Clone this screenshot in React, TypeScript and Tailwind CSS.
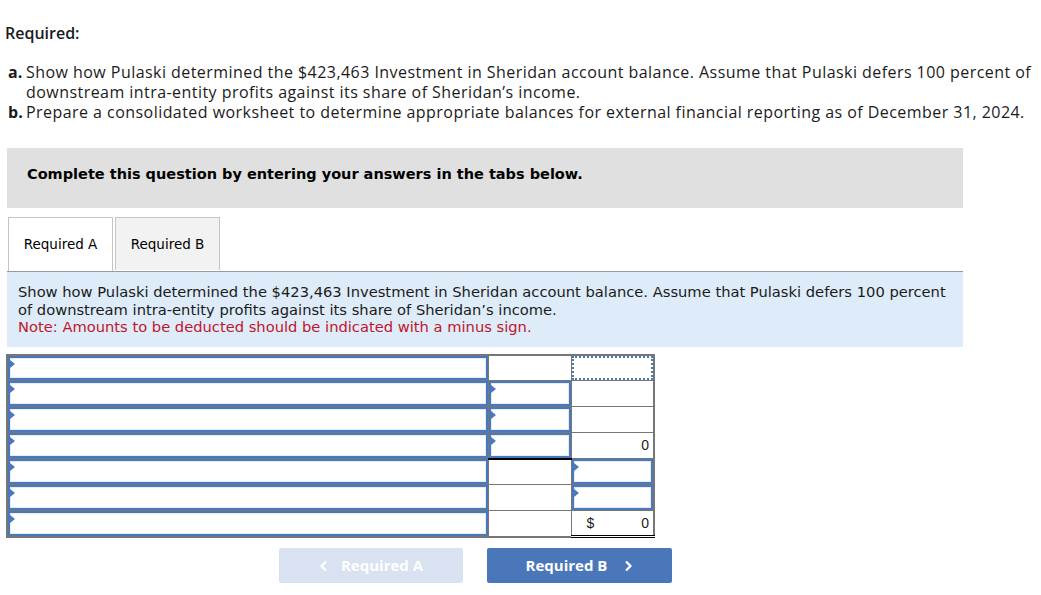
import React from "react";

function Tri() {
  return (
    <span className="absolute left-0 top-[2px] w-0 h-0 border-y-[4px] border-y-transparent border-l-[5px] border-l-[#4a78bc]" />
  );
}

function Input({ tri = true }: { tri?: boolean }) {
  return (
    <div className="relative h-full w-full border-2 border-[#4a78bc] shadow-[inset_0_0_0_1px_#e3ecf8] bg-white">
      {tri && <Tri />}
    </div>
  );
}

type Cell =
  | { k: "in"; tri?: boolean; extra?: string }
  | { k: "empty"; extra?: string }
  | { k: "dot" }
  | { k: "val"; v: string; dollar?: boolean; extra?: string };

const rows: Cell[][] = [
  [{ k: "in" }, { k: "empty" }, { k: "dot" }],
  [{ k: "in" }, { k: "in" }, { k: "empty" }],
  [{ k: "in" }, { k: "in" }, { k: "empty" }],
  [{ k: "in" }, { k: "in", extra: "border-b-2 border-b-black" }, { k: "val", v: "0" }],
  [{ k: "in" }, { k: "empty" }, { k: "in" }],
  [{ k: "in" }, { k: "empty" }, { k: "in" }],
  [{ k: "in" }, { k: "empty" }, { k: "val", v: "0", dollar: true, extra: "border-b-[3px] border-b-black border-double" }],
];

const widths = ["w-[481px]", "w-[83px]", "w-[83px]"];

function renderCell(c: Cell, i: number) {
  const base = `h-[26px] p-0 border border-[#767676] align-middle ${widths[i]}`;
  if (c.k === "in")
    return (
      <td key={i} className={`${base} ${c.extra ?? ""}`}>
        <Input tri={c.tri ?? true} />
      </td>
    );
  if (c.k === "empty") return <td key={i} className={`${base} ${c.extra ?? ""}`} />;
  if (c.k === "dot")
    return (
      <td key={i} className={base}>
        <div className="h-full w-full border-2 border-dotted border-[#4a78bc]" />
      </td>
    );
  return (
    <td key={i} className={`${base} ${c.extra ?? ""}`}>
      <div className="flex items-center justify-between h-full px-[4px] font-['Liberation_Sans',Arial,sans-serif] text-[14px] text-[#222]">
        <span className="pl-[11px]">{c.dollar ? "$" : ""}</span>
        <span>{c.v}</span>
      </div>
    </td>
  );
}

export default function App() {
  return (
    <div className="w-[1041px] h-[595px] bg-white text-[#1b1b1b] overflow-hidden">
      <div className="font-['Open_Sans',Arial,sans-serif] text-[16px] pr-[4px] tracking-[0.45px]">
        <div className="pt-[23px] pl-[5px] font-semibold leading-[20px] tracking-normal">Required:</div>
        <div className="mt-[19px] leading-[20px]">
          <div className="flex pl-[8px]">
            <span className="w-[18px] font-bold shrink-0 tracking-normal">a.</span>
            <span>
              Show how Pulaski determined the $423,463 Investment in Sheridan account balance. Assume that Pulaski defers 100 percent of downstream intra-entity profits against its share of Sheridan’s income.
            </span>
          </div>
          <div className="flex pl-[8px]">
            <span className="w-[18px] font-bold shrink-0 tracking-normal">b.</span>
            <span>
              Prepare a consolidated worksheet to determine appropriate balances for external financial reporting as of December 31, 2024.
            </span>
          </div>
        </div>
      </div>

      <div className="ml-[7px] mt-[26px] w-[956px] h-[60px] bg-[#e0e0e0] flex items-center pl-[20px] pb-[7px] font-['DejaVu_Sans',Verdana,sans-serif] font-bold text-[14.5px] text-black">
        Complete this question by entering your answers in the tabs below.
      </div>

      <div className="ml-[8px] mt-[9px] flex gap-[2px] font-['DejaVu_Sans',Verdana,sans-serif] text-[13.5px] text-black">
        <div className="w-[105px] h-[54px] border border-[#c4c4c4] border-b-0 bg-white flex items-center justify-center relative z-10">
          Required A
        </div>
        <div className="w-[105px] h-[53px] border border-[#c4c4c4] border-b-0 bg-[#f2f2f2] flex items-center justify-center">
          Required B
        </div>
      </div>

      <div className="ml-[7px] w-[956px] border-t border-[#9a9a9a] bg-[#deebf8] pl-[11px] pr-[10px] pt-[11px] pb-[11px] font-['DejaVu_Sans',Verdana,sans-serif] text-[14.7px] leading-[17.5px] text-[#1b1b1b]">
        <div>
          Show how Pulaski determined the $423,463 Investment in Sheridan account balance. Assume that Pulaski defers 100 percent of downstream intra-entity profits against its share of Sheridan’s income.
        </div>
        <div className="text-[#c0162b]">Note: Amounts to be deducted should be indicated with a minus sign.</div>
      </div>

      <table className="ml-[6px] mt-[7px] border-collapse border-2 border-[#767676]">
        <tbody>
          {rows.map((r, ri) => (
            <tr key={ri}>{r.map((c, ci) => renderCell(c, ci))}</tr>
          ))}
        </tbody>
      </table>

      <div className="ml-[279px] mt-[10px] flex gap-[24px] font-['Open_Sans',Arial,sans-serif] font-bold text-[15px] text-white">
        <div className="w-[184px] h-[35px] rounded-[2px] bg-[#d9e2f1] flex items-center justify-center gap-[12px]">
          <svg width="10" height="12" viewBox="0 0 10 12" fill="none" stroke="white" strokeWidth="2.2">
            <path d="M7 1.5 L2.5 6 L7 10.5" />
          </svg>
          <span>Required A</span>
        </div>
        <div className="w-[185px] h-[35px] rounded-[2px] bg-[#4a76ba] flex items-center justify-center gap-[16px]">
          <span>Required B</span>
          <svg width="10" height="12" viewBox="0 0 10 12" fill="none" stroke="white" strokeWidth="2.2">
            <path d="M3 1.5 L7.5 6 L3 10.5" />
          </svg>
        </div>
      </div>
    </div>
  );
}
